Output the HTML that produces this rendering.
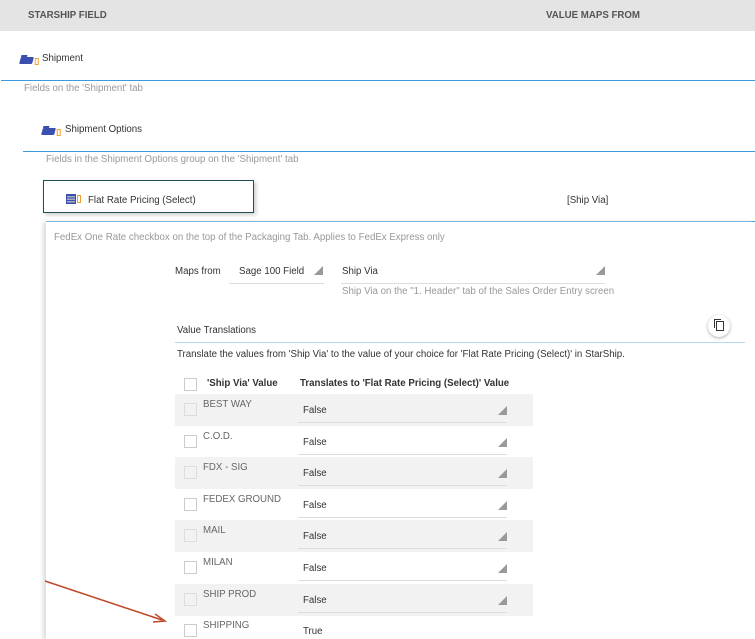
<!DOCTYPE html><html><head><style>
body{margin:0;width:755px;height:639px;overflow:hidden;background:#fff;font-family:"Liberation Sans",sans-serif;position:relative;font-size:9.7px;color:#333}
.a{position:absolute;white-space:nowrap}
.g{color:#999}
.tri{position:absolute;width:0;height:0;border-left:9px solid transparent;border-bottom:9px solid #999}
.cb{position:absolute;width:11px;height:11px;border:1px solid #ccc;background:#fff}
.fold{position:absolute;width:13px;height:7px;background:#3a4fb0;border-radius:1px;transform:skewX(-15deg)}
.fold:before{content:"";position:absolute;left:0;top:-2px;width:6px;height:2px;background:#3a4fb0}
.fold:after{content:"";position:absolute;left:15px;top:1px;width:2px;height:5px;border:1px solid #f0a030;transform:skewX(15deg)}
</style></head><body>
<div class="a" style="left:0;top:0;width:755px;height:31px;background:#e4e4e4"></div>
<div class="a" style="left:28px;top:10px;font-weight:bold;color:#555">STARSHIP FIELD</div>
<div class="a" style="left:546px;top:10px;font-weight:bold;color:#555">VALUE MAPS FROM</div>
<div class="fold" style="left:20px;top:57px"></div>
<div class="a" style="left:42px;top:53px">Shipment</div>
<div class="a" style="left:1px;top:80px;width:754px;height:1px;background:#3a9ae0"></div>
<div class="a g" style="left:24px;top:83px">Fields on the 'Shipment' tab</div>
<div class="fold" style="left:42px;top:128px"></div>
<div class="a" style="left:65px;top:124px">Shipment Options</div>
<div class="a" style="left:23px;top:151px;width:732px;height:1px;background:#3a9ae0"></div>
<div class="a g" style="left:46px;top:154px">Fields in the Shipment Options group on the 'Shipment' tab</div>
<div class="a" style="left:43px;top:180px;width:209px;height:31px;border:1px solid #1f4f55;box-shadow:2px 2px 4px #ccc"></div>
<div class="a" style="left:66px;top:194px;width:8px;height:8px;border:1px solid #3a4fb0;background:repeating-linear-gradient(#3a4fb0 0 1px,#aab 1px 2.5px)"></div>
<div class="a" style="left:77px;top:195px;width:2px;height:6px;border:1px solid #f0a030"></div>
<div class="a" style="left:88px;top:195px">Flat Rate Pricing (Select)</div>
<div class="a" style="left:567px;top:195px">[Ship Via]</div>
<div class="a" style="left:46px;top:221px;width:709px;height:1px;background:#3a9ae0"></div>
<div class="a" style="left:46px;top:222px;width:709px;height:417px;box-shadow:-3px 0 4px #ddd"></div>
<div class="a g" style="left:54px;top:232px">FedEx One Rate checkbox on the top of the Packaging Tab. Applies to FedEx Express only</div>
<div class="a" style="left:175px;top:266px">Maps from</div>
<div class="a" style="left:239px;top:266px">Sage 100 Field</div>
<div class="tri" style="left:314px;top:266px"></div>
<div class="a" style="left:229px;top:283px;width:95px;height:1px;background:#ddd"></div>
<div class="a" style="left:342px;top:266px">Ship Via</div>
<div class="tri" style="left:596px;top:266px"></div>
<div class="a" style="left:341px;top:283px;width:264px;height:1px;background:#ddd"></div>
<div class="a g" style="left:342px;top:286px">Ship Via on the "1. Header" tab of the Sales Order Entry screen</div>
<div class="a" style="left:177px;top:325px">Value Translations</div>
<div class="a" style="left:175px;top:342px;width:570px;height:1px;background:#b3d9f5"></div>
<div class="a" style="left:708px;top:315px;width:22px;height:22px;border-radius:50%;background:#fff;box-shadow:0 1px 3px #aaa"></div>
<div class="a" style="left:716px;top:321px;width:6px;height:8px;border:1px solid #333;background:#fff"></div>
<div class="a" style="left:714px;top:319px;width:6px;height:8px;border-left:1px solid #333;border-top:1px solid #333"></div>
<div class="a" style="left:177px;top:349px">Translate the values from 'Ship Via' to the value of your choice for 'Flat Rate Pricing (Select)' in StarShip.</div>
<div class="cb" style="left:184px;top:378px"></div>
<div class="a" style="left:207px;top:378px;font-weight:bold;color:#333">'Ship Via' Value</div>
<div class="a" style="left:300px;top:378px;font-weight:bold;color:#333">Translates to 'Flat Rate Pricing (Select)' Value</div>
<div id="rows"></div>
<script>
var d=[["BEST WAY",394,1],["C.O.D.",426,0],["FDX - SIG",457,1],["FEDEX GROUND",489,0],["MAIL",520,1],["MILAN",552,0],["SHIP PROD",584,1],["SHIPPING",615,0]],h="";
d.forEach(function(r,i){var t=r[1];
if(r[2])h+='<div class="a" style="left:175px;top:'+t+'px;width:358px;height:32px;background:#f2f2f2"></div>';
h+='<div class="cb" style="left:184px;top:'+(t+9)+'px;border-color:'+(r[2]?'#ddd':'#ccc')+';background:'+(r[2]?'#f2f2f2':'#fff')+'"></div>';
h+='<div class="a" style="left:203px;top:'+(t+5)+'px;color:#666">'+r[0]+'</div>';
h+='<div class="a" style="left:303px;top:'+(t+11)+'px">'+(i==7?'True':'False')+'</div>';
if(i<7){h+='<div class="tri" style="left:498px;top:'+(t+12)+'px"></div>';
h+='<div class="a" style="left:298px;top:'+(t+28)+'px;width:209px;height:1px;background:#ddd"></div>';}
});
document.getElementById("rows").innerHTML=h;
</script>
<svg class="a" style="left:0;top:0" width="755" height="639"><line x1="45" y1="581" x2="162" y2="620" stroke="#c0492b" stroke-width="1.5"/><path d="M155 614 L165 621 L153 622" fill="none" stroke="#c0492b" stroke-width="1.5"/></svg>
</body></html>
